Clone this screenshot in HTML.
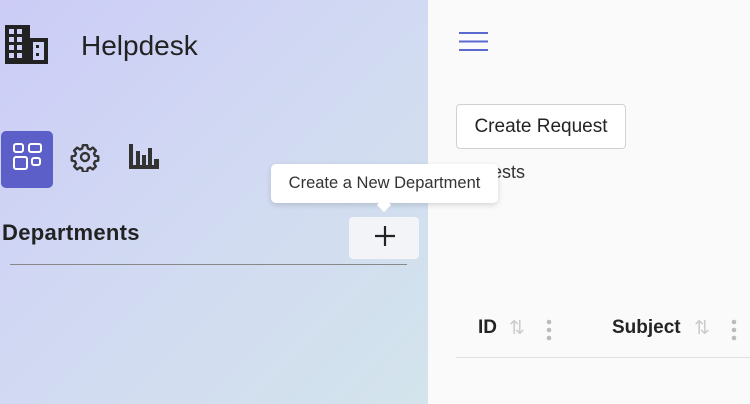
<!DOCTYPE html>
<html><head><meta charset="utf-8"><style>
*{margin:0;padding:0;box-sizing:border-box}
body{width:750px;height:404px;overflow:hidden;font-family:"Liberation Sans",sans-serif;background:#fafafa;position:relative}
#side{position:absolute;left:0;top:0;width:428px;height:404px;background:linear-gradient(135deg,#ccccf7 0%,#d1daf2 50%,#d3e4ec 100%)}
.abs{position:absolute}
</style></head><body>
<div id="side">
  <svg class="abs" style="left:5px;top:25px" width="43" height="39" viewBox="0 0 43 39">
    <path fill="#222" d="M0 0h25v13h18v26H0z"/>
    <g fill="#cfd0f5">
      <rect x="4" y="4" width="5" height="5"/><rect x="12" y="4" width="5" height="5"/>
      <rect x="4" y="12" width="5" height="5"/><rect x="12" y="12" width="5" height="5"/>
      <rect x="4" y="20" width="5" height="5"/><rect x="12" y="20" width="5" height="5"/>
      <rect x="4" y="28" width="5" height="5"/><rect x="12" y="28" width="5" height="5"/>
      <rect x="28" y="17" width="11" height="18"/>
    </g>
    <g fill="#222"><rect x="31" y="20" width="3" height="3"/><rect x="31" y="28" width="3" height="3"/></g>
  </svg>
  <div class="abs" style="left:81px;top:30px;font-size:28px;color:#222">Helpdesk</div>
  <div class="abs" style="left:1px;top:131px;width:52px;height:57px;background:#5b5fc7;border-radius:5px"></div>
  <svg class="abs" style="left:13px;top:143px" width="30" height="28" viewBox="0 0 30 28" fill="none" stroke="#fff" stroke-width="2">
    <rect x="1" y="1" width="9" height="8" rx="2"/><rect x="16" y="1" width="12" height="8" rx="2"/>
    <rect x="1" y="14" width="13" height="12" rx="2"/><rect x="19" y="15" width="8" height="7" rx="2"/>
  </svg>
  <svg class="abs" style="left:70px;top:142px" width="30" height="30" viewBox="0 0 24 24" fill="none" stroke="#333" stroke-width="1.9">
    <circle cx="12" cy="12" r="3.2"/>
    <path d="M10.3 2.5h3.4l.5 2.6 1.9.9 2.2-1.5 2.4 2.4-1.5 2.2.8 1.9 2.6.5v3.4l-2.6.5-.8 1.9 1.5 2.2-2.4 2.4-2.2-1.5-1.9.8-.5 2.6h-3.4l-.5-2.6-1.9-.8-2.2 1.5-2.4-2.4 1.5-2.2-.8-1.9-2.6-.5v-3.4l2.6-.5.8-1.9-1.5-2.2 2.4-2.4 2.2 1.5 1.9-.9z" stroke-linejoin="round"/>
  </svg>
  <svg class="abs" style="left:129px;top:144px" width="30" height="25" viewBox="0 0 30 25" fill="#333">
    <rect x="0" y="0" width="4" height="25"/><rect x="0" y="21" width="30" height="4"/>
    <rect x="7" y="7" width="4" height="16"/><rect x="13" y="11" width="4" height="12"/><rect x="19" y="4" width="4" height="19"/><rect x="25" y="15" width="5" height="8"/>
  </svg>
  <div class="abs" style="left:2px;top:220px;font-size:22px;font-weight:bold;color:#222;letter-spacing:0.3px">Departments</div>
  <div class="abs" style="left:349px;top:217px;width:70px;height:42px;background:#f3f4f7;border-radius:4px"></div>
  <svg class="abs" style="left:374px;top:225px" width="22" height="22"><path d="M11 1v20M1 11h20" stroke="#222" stroke-width="2.2"/></svg>
  <div class="abs" style="left:10px;top:264px;width:397px;height:1px;background:#888"></div>
</div>
<svg class="abs" style="left:459px;top:31px" width="29" height="21"><path d="M0 2h29M0 10.5h29M0 19h29" stroke="#5b6ad0" stroke-width="2"/></svg>
<div class="abs" style="left:456px;top:104px;width:170px;height:45px;background:#fff;border:1px solid #d1d1d1;border-radius:4px;font-size:19px;color:#242424;text-align:center;line-height:43px">Create Request</div>
<div class="abs" style="left:482px;top:162px;font-size:18px;color:#333">uests</div>
<div class="abs" style="left:271px;top:164px;width:227px;height:39px;background:#fff;border-radius:5px;box-shadow:0 2px 6px rgba(0,0,0,.15);font-size:16.5px;color:#333;line-height:39px;text-align:center">Create a New Department</div>
<div class="abs" style="left:379px;top:200px;width:10px;height:10px;background:#fff;transform:rotate(45deg)"></div>
<div class="abs" style="left:478px;top:317px;font-size:19px;font-weight:bold;color:#242424">ID</div>
<div class="abs" style="left:509px;top:317px;font-size:19px;color:#ccc">⇅</div>
<svg class="abs" style="left:546px;top:319px" width="6" height="22" fill="#bbb"><circle cx="3" cy="3" r="2.3"/><circle cx="3" cy="11" r="2.3"/><circle cx="3" cy="19" r="2.3"/></svg>
<div class="abs" style="left:612px;top:317px;font-size:19px;font-weight:bold;color:#242424">Subject</div>
<div class="abs" style="left:694px;top:317px;font-size:19px;color:#ccc">⇅</div>
<svg class="abs" style="left:731px;top:319px" width="6" height="22" fill="#bbb"><circle cx="3" cy="3" r="2.3"/><circle cx="3" cy="11" r="2.3"/><circle cx="3" cy="19" r="2.3"/></svg>
<div class="abs" style="left:456px;top:357px;width:294px;height:1px;background:#e0e0e0"></div>
</body></html>
